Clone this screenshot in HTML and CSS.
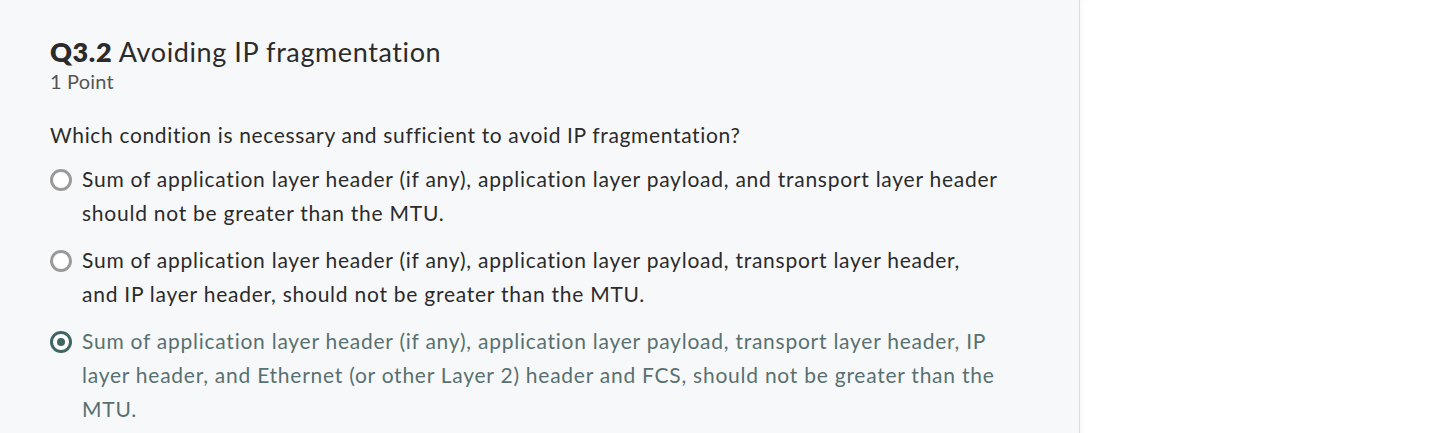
FILE: index.html
```html
<!doctype html>
<html lang="en">
  <head>
    <meta charset="UTF-8" />
    <title>Q3.2 Avoiding IP fragmentation</title>
    <link rel="stylesheet" href="styles.css">
  </head>
  <body>
    <div class="layout">
      <main class="question-pane">
        <h2 class="question-title"><strong>Q3.2</strong> Avoiding IP fragmentation</h2>
        <div class="points">1 Point</div>
        <p class="prompt">Which condition is necessary and sufficient to avoid IP fragmentation?</p>

        <ul class="choices">
          <li class="choice">
            <span class="radio"></span>
            <span class="choice-text">Sum of application layer header (if any), application layer payload, and transport layer header should not be greater than the MTU.</span>
          </li>
          <li class="choice">
            <span class="radio"></span>
            <span class="choice-text">Sum of application layer header (if any), application layer payload, transport layer header, and IP layer header, should not be greater than the MTU.</span>
          </li>
          <li class="choice selected">
            <span class="radio"></span>
            <span class="choice-text">Sum of application layer header (if any), application layer payload, transport layer header, IP layer header, and Ethernet (or other Layer 2) header and FCS, should not be greater than the MTU.</span>
          </li>
        </ul>
      </main>
      <aside class="side-pane"></aside>
    </div>
  </body>
</html>
```

FILE: styles.css
```css
body {
  margin: 0;
  font-family: Lato, "Liberation Sans", sans-serif;
  background: #fff;
  color: #333;
}
.layout {
  display: flex;
  min-height: 100vh;
}
.question-pane {
  width: 1080px;
  box-sizing: border-box;
  background: #f7f8fa;
  border-right: 1px solid #dcdcdc;
  padding: 36px 50px 0;
}
.side-pane {
  flex: 1;
  box-shadow: inset 4px 0 6px -4px rgba(0, 0, 0, 0.06);
}
.question-title {
  margin: 0;
  font-size: 27px;
  font-weight: 400;
  letter-spacing: 0.6px;
  line-height: 32px;
  color: #2b2b2b;
}
.question-title strong {
  font-weight: 800;
}
.points {
  font-size: 20px;
  letter-spacing: 0.2px;
  line-height: 26px;
  color: #555;
}
.prompt {
  margin: 26px 0 12px;
  font-size: 21px;
  letter-spacing: 0.65px;
  line-height: 30px;
  color: #2b2b2b;
}
.choices {
  list-style: none;
  margin: 0;
  padding: 0;
}
.choice {
  display: flex;
  align-items: flex-start;
  margin-bottom: 13px;
  font-size: 21px;
  letter-spacing: 0.75px;
  line-height: 34px;
  color: #2b2b2b;
}
.choice-text {
  width: 919px;
}
.radio {
  flex: none;
  width: 16px;
  height: 16px;
  margin: 7px 10px 0 0;
  border: 3px solid #9a9a9a;
  border-radius: 50%;
  background: #fff;
  display: flex;
  align-items: center;
  justify-content: center;
}
.selected {
  color: #587170;
}
.selected .radio {
  border-color: #3f6665;
}
.selected .radio::after {
  content: "";
  width: 8px;
  height: 8px;
  border-radius: 50%;
  background: #3f6665;
}
```
